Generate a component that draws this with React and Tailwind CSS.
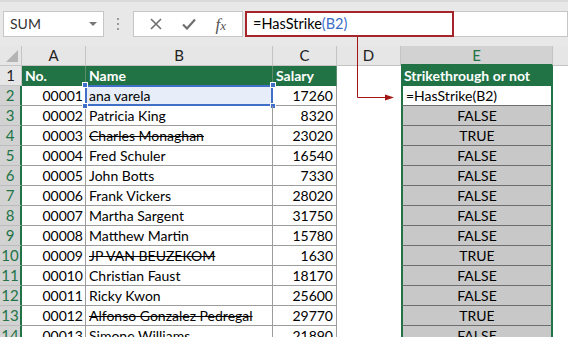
import React from 'react'

const GRID = 'grid grid-cols-[22px_64px_187px_64px_64px_152px_15px]'

const ROWS = [
  { no: '00001', name: 'ana varela', salary: '17260', res: null },
  { no: '00002', name: 'Patricia King', salary: '8320', res: 'FALSE' },
  { no: '00003', name: 'Charles Monaghan', salary: '23020', res: 'TRUE', strike: true },
  { no: '00004', name: 'Fred Schuler', salary: '16540', res: 'FALSE' },
  { no: '00005', name: 'John Botts', salary: '7330', res: 'FALSE' },
  { no: '00006', name: 'Frank Vickers', salary: '28020', res: 'FALSE' },
  { no: '00007', name: 'Martha Sargent', salary: '31750', res: 'FALSE' },
  { no: '00008', name: 'Matthew Martin', salary: '15780', res: 'FALSE' },
  { no: '00009', name: 'JP VAN BEUZEKOM', salary: '1630', res: 'TRUE', strike: true },
  { no: '00010', name: 'Christian Faust', salary: '18170', res: 'FALSE' },
  { no: '00011', name: 'Ricky Kwon', salary: '25600', res: 'FALSE' },
  { no: '00012', name: 'Alfonso Gonzalez Pedregal', salary: '29770', res: 'TRUE', strike: true },
  { no: '00013', name: 'Simone Williams', salary: '21890', res: 'FALSE' },
]

function Handle({ className }) {
  return <span className={`absolute h-[6px] w-[6px] border border-white bg-[#3f6fc6] ${className}`} />
}

function FormulaBar() {
  return (
    <div className="flex h-[46px] items-start border-t-2 border-[#dadada] bg-[#e8e8e8] pt-[9px]">
      {/* name box */}
      <div className="ml-[3px] flex h-[26px] w-[101px] items-center justify-between border border-[#c6c6c6] bg-white pl-[6px] pr-[6px] text-[14px] text-[#333]">
        <span>SUM</span>
        <svg width="8" height="5" viewBox="0 0 8 5"><path d="M0 0h8L4 4z" fill="#777" /></svg>
      </div>
      <div className="mx-[13px] flex h-[26px] flex-col items-center justify-center gap-[3px]">
        <span className="h-[2px] w-[2px] bg-[#9a9a9a]" />
        <span className="h-[2px] w-[2px] bg-[#9a9a9a]" />
        <span className="h-[2px] w-[2px] bg-[#9a9a9a]" />
      </div>
      {/* cancel / enter / fx */}
      <div className="ml-[1px] flex h-[26px] w-[110px] items-center justify-around border border-[#c6c6c6] bg-white px-[6px]">
        <svg width="12" height="12" viewBox="0 0 12 12"><path d="M1 1l10 10M11 1L1 11" stroke="#6f6f6f" strokeWidth="1.6" /></svg>
        <svg width="14" height="12" viewBox="0 0 14 12"><path d="M1 6.5l4 4L13 1.5" stroke="#6f6f6f" strokeWidth="2.2" fill="none" /></svg>
        <span className="font-['Liberation_Serif',serif] text-[17px] italic text-[#555]">
          f<span className="text-[13px]">x</span>
        </span>
      </div>
      {/* formula input */}
      <div className="ml-[2px] flex h-[26px] w-[209px] items-center border-2 border-[#a4262c] bg-white pl-[6px] text-[14.5px] text-black">
        =HasStrike<span className="text-[#3a6cc6]">(B2)</span>
      </div>
      <div className="h-[26px] flex-1 border-y border-r border-[#c6c6c6] bg-white" />
    </div>
  )
}

function ColumnHeaders() {
  const cell = 'flex items-center justify-center border-r border-b border-[#c4c4c4] bg-[#e6e6e6] text-[15px] text-[#222]'
  return (
    <div className={`${GRID} h-[20px]`}>
      <div className="relative border-r border-b border-[#c4c4c4] bg-[#e6e6e6]">
        <svg className="absolute bottom-[3px] right-[3px]" width="12" height="12" viewBox="0 0 12 12">
          <path d="M12 0v12H0z" fill="#b4b4b4" />
        </svg>
      </div>
      <div className={cell}>A</div>
      <div className={cell}>B</div>
      <div className={cell}>C</div>
      <div className={cell}>D</div>
      <div className="flex items-center justify-center border-r border-b-2 border-r-[#c4c4c4] border-b-[#217346] bg-[#d2d2d2] text-[15px] text-[#217346]">E</div>
      <div className="border-b border-[#c4c4c4] bg-[#e6e6e6]" />
    </div>
  )
}

function HeaderRow() {
  const green = 'flex items-center bg-[#217346] border-r border-[#5d8c6c] text-[14px] font-bold text-white'
  return (
    <div className={`${GRID} h-[20px]`}>
      <div className="flex items-center justify-center border-r border-b border-[#c4c4c4] bg-[#e6e6e6] text-[15px] text-[#222]">1</div>
      <div className={`${green} pl-[3px]`}>No.</div>
      <div className={`${green} pl-[3px]`}>Name</div>
      <div className={`${green} pl-[3px]`}>Salary</div>
      <div className="bg-white" />
      <div className={`${green} border-r-0 pl-[3px]`}>Strikethrough or not</div>
      <div className="bg-white" />
    </div>
  )
}

function DataRow({ row, index }) {
  const num = index + 2
  const selected = index === 0
  const line = 'border-r border-b border-[#9c9c9c]'
  return (
    <div className={`${GRID} h-[20px] text-[14px] text-black`}>
      <div className="flex items-center justify-center border-r-2 border-b border-r-[#217346] border-b-[#bcbcbc] bg-[#d2d2d2] text-[15px] text-[#217346]">
        {num}
      </div>
      <div className={`flex items-center justify-end pr-[2px] ${line}`}>{row.no}</div>
      <div className={`relative flex items-center pl-[3px] ${line} ${selected ? 'bg-[#e7eef9]' : ''}`}>
        <span className={row.strike ? 'line-through decoration-1' : ''}>{row.name}</span>
        {selected && (
          <>
            <span className="pointer-events-none absolute inset-[-1px] border-2 border-[#3f6fc6]" />
            <Handle className="left-[-4px] top-[-4px]" />
            <Handle className="right-[-4px] top-[-4px]" />
            <Handle className="bottom-[-4px] left-[-4px]" />
            <Handle className="bottom-[-4px] right-[-4px]" />
          </>
        )}
      </div>
      <div className={`flex items-center justify-end pr-[3px] ${line}`}>{row.salary}</div>
      <div className="bg-white" />
      {row.res === null ? (
        <div className="flex items-center border-x-2 border-b border-x-[#217346] border-b-[#6e6e6e] bg-white pl-[3px]">
          =HasStrike(B2)
        </div>
      ) : (
        <div className="flex items-center justify-center border-x-2 border-b border-x-[#217346] border-b-[#6e6e6e] bg-[#c8c8c8]">
          {row.res}
        </div>
      )}
      <div className="bg-white" />
    </div>
  )
}

export default function App() {
  return (
    <div className="relative h-[337px] w-[568px] overflow-hidden bg-white font-['Lato','Liberation_Sans',sans-serif] leading-none">
      <FormulaBar />
      <ColumnHeaders />
      <HeaderRow />
      {ROWS.map((row, i) => (
        <DataRow key={row.no} row={row} index={i} />
      ))}

      {/* red pointer from formula bar to E2 */}
      <svg className="pointer-events-none absolute left-0 top-0" width="568" height="337">
        <path d="M357.5 37V97.5H386" stroke="#a31515" strokeWidth="1" fill="none" />
        <path d="M385 94.5L394 97.5L385 100.5z" fill="#a31515" />
      </svg>
    </div>
  )
}
